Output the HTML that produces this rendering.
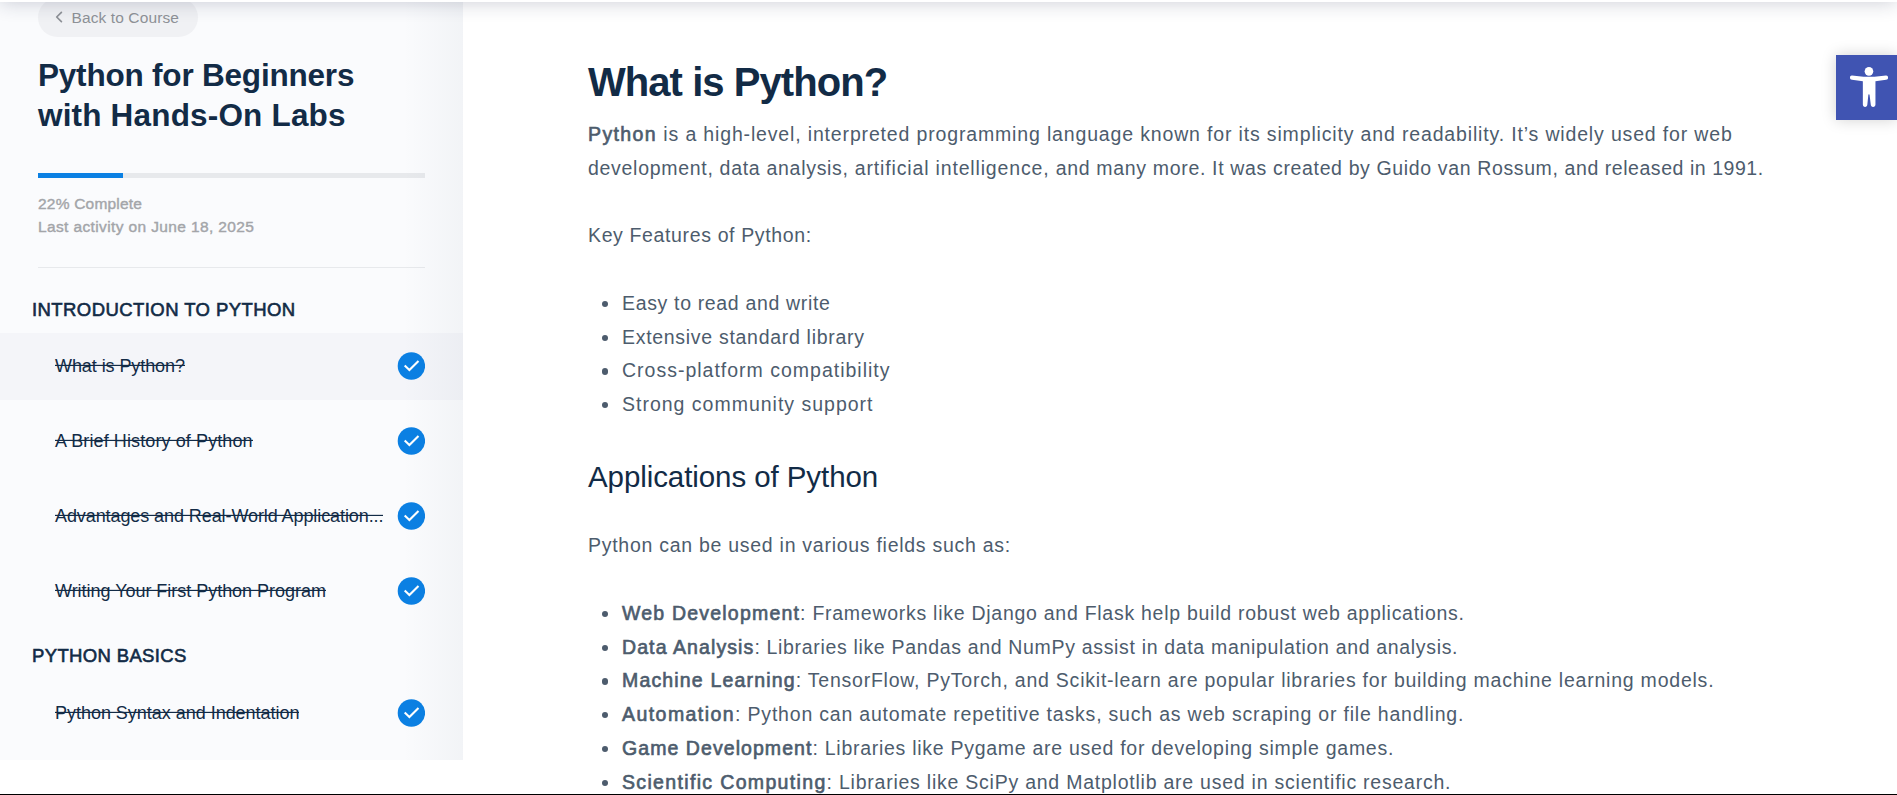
<!DOCTYPE html>
<html lang="en">
<head>
<meta charset="utf-8">
<title>What is Python? – Python for Beginners with Hands-On Labs</title>
<style>
*{box-sizing:border-box;margin:0;padding:0}
html,body{width:1897px;height:795px;overflow:hidden;background:#fff}
body{position:relative;font-family:"Liberation Sans",Arial,sans-serif;color:#4d5c6d;-webkit-font-smoothing:antialiased}
a{color:inherit;text-decoration:none}
ul{list-style:none}
.ln{white-space:nowrap;display:inline-block}

/* ---------- sidebar ---------- */
#side{position:absolute;left:0;top:0;width:463px;height:760px;background:#fafbfd;overflow:hidden}
#side:after{content:"";position:absolute;right:0;top:0;width:60px;height:100%;background:linear-gradient(to right,rgba(18,43,70,0),rgba(18,43,70,.037));pointer-events:none}
#back{position:absolute;left:38px;top:-2px;width:160px;height:39px;border-radius:20px;background:#f0f1f4;color:#8e9197;font-size:15.5px;line-height:39px}
#back svg{position:absolute;left:17px;top:13px}
#back .ln{position:absolute;left:33.5px;top:0}
#ctitle{position:absolute;left:38px;top:54.6px;font-weight:700;color:#122b46;font-size:31.5px;line-height:40px}
#ctitle .ln{display:block;width:max-content}
#pbar{position:absolute;left:38px;top:173px;width:387px;height:5px;background:#e7e9ec;border-radius:0}
#pbar i{display:block;width:85px;height:5px;background:#0b80e3}
#pstat{position:absolute;left:38px;top:192px;color:#a3a5a9;font-size:15.5px;line-height:23px;font-weight:400}
#pstat .ln{display:block;width:max-content;-webkit-text-stroke:.4px #a3a5a9}
#sdiv{position:absolute;left:38px;top:267px;width:387px;height:1px;background:#e7e9ec}
.sec{position:absolute;left:32px;color:#122b46;font-weight:400;-webkit-text-stroke:.6px #122b46;font-size:18.5px;line-height:24px;text-transform:none}
.row{position:absolute;left:0;width:463px;height:67px}
.row.cur{background:#f4f5f9}
.row .t{position:absolute;left:55px;top:21px;line-height:24px;font-size:18px;color:#122b46;text-decoration:none}
.row .t:after{content:"";position:absolute;left:0;right:0;top:11px;height:1px;background:#122b46;box-shadow:0 -.5px 0 rgba(18,43,70,.35)}
.row .c{position:absolute;left:397px;top:19px;width:28px;height:28px}

/* ---------- top shadow ---------- */
#topshadow{position:absolute;left:0;top:-60px;width:1897px;height:62px;background:#fff;box-shadow:0 0 20px rgba(28,38,70,.24);pointer-events:none}

/* ---------- main ---------- */
#main{position:absolute;left:588px;top:0;width:1250px}
#main h1{position:absolute;left:0;top:58px;font-size:40px;line-height:48px;font-weight:700;color:#122b46}
#main h2{position:absolute;left:0;top:456.6px;font-size:29.5px;line-height:40px;font-weight:400;color:#122b46}
.body{position:absolute;left:0;font-size:19.5px;line-height:33.75px;color:#4d5c6d}
.body b{font-weight:400;-webkit-text-stroke:.65px #4d5c6d}
.body .ln{display:block;width:max-content;height:33.75px}
ul.body li{position:relative;padding-left:34px;height:33.75px}
ul.body li:before{content:"";position:absolute;left:14px;top:13.9px;width:6.4px;height:6.4px;border-radius:50%;background:#4d5c6d}

/* ---------- accessibility button ---------- */
#a11y{position:absolute;left:1836px;top:55px;width:61px;height:65px;background:#4054b2;box-shadow:0 0 14px rgba(0,0,0,.18)}
#a11y svg{position:absolute;left:0;top:0}
#bline{position:absolute;left:0;top:794px;width:1897px;height:1px;background:#000}
</style>
</head>
<body>

<div id="side">
  <a id="back"><svg width="8" height="12" viewBox="0 0 8 12"><path d="M6.4 1.300L1.700 6L6.400 10.700" fill="none" stroke="#8e9197" stroke-width="1.7" stroke-linecap="round" stroke-linejoin="round"/></svg><span class="ln" id="back_t" style="letter-spacing:0.109px">Back to Course</span></a>
  <h2 id="ctitle"><span class="ln" id="ct1" style="letter-spacing:-0.204px">Python for Beginners</span><span class="ln" id="ct2" style="letter-spacing:0.177px">with Hands-On Labs</span></h2>
  <div id="pbar"><i></i></div>
  <div id="pstat"><span class="ln" id="ps1" style="letter-spacing:0.211px">22% Complete</span><span class="ln" id="ps2" style="letter-spacing:0.374px">Last activity on June 18, 2025</span></div>
  <div id="sdiv"></div>

  <div class="sec" style="top:298px"><span class="ln" id="sec1" style="letter-spacing:0.426px">INTRODUCTION TO PYTHON</span></div>
  <div class="row cur" style="top:333px"><span class="t ln" id="l1" style="letter-spacing:-0.077px">What is Python?</span><svg class="c" viewBox="0 0 28 28"><circle cx="14.4" cy="14" r="13.7" fill="#0b80e3"/><path d="M7.700 13.600L12.400 18L21.500 9" fill="none" stroke="#fff" stroke-width="2.1" stroke-linecap="butt" stroke-linejoin="miter"/></svg></div>
  <div class="row" style="top:408px"><span class="t ln" id="l2" style="letter-spacing:0.104px">A Brief History of Python</span><svg class="c" viewBox="0 0 28 28"><circle cx="14.4" cy="14" r="13.7" fill="#0b80e3"/><path d="M7.700 13.600L12.400 18L21.500 9" fill="none" stroke="#fff" stroke-width="2.1" stroke-linecap="butt" stroke-linejoin="miter"/></svg></div>
  <div class="row" style="top:483px"><span class="t ln" id="l3" style="letter-spacing:-0.087px">Advantages and Real-World Application...</span><svg class="c" viewBox="0 0 28 28"><circle cx="14.4" cy="14" r="13.7" fill="#0b80e3"/><path d="M7.700 13.600L12.400 18L21.500 9" fill="none" stroke="#fff" stroke-width="2.1" stroke-linecap="butt" stroke-linejoin="miter"/></svg></div>
  <div class="row" style="top:558px"><span class="t ln" id="l4" style="letter-spacing:-0.027px">Writing Your First Python Program</span><svg class="c" viewBox="0 0 28 28"><circle cx="14.4" cy="14" r="13.7" fill="#0b80e3"/><path d="M7.700 13.600L12.400 18L21.500 9" fill="none" stroke="#fff" stroke-width="2.1" stroke-linecap="butt" stroke-linejoin="miter"/></svg></div>
  <div class="sec" style="top:643.5px"><span class="ln" id="sec2" style="letter-spacing:0.354px">PYTHON BASICS</span></div>
  <div class="row" style="top:680px"><span class="t ln" id="l5" style="letter-spacing:-0.024px">Python Syntax and Indentation</span><svg class="c" viewBox="0 0 28 28"><circle cx="14.4" cy="14" r="13.7" fill="#0b80e3"/><path d="M7.700 13.600L12.400 18L21.500 9" fill="none" stroke="#fff" stroke-width="2.1" stroke-linecap="butt" stroke-linejoin="miter"/></svg></div>
</div>

<div id="main">
  <h1><span class="ln" id="h1" style="letter-spacing:-0.942px">What is Python?</span></h1>
  <p class="body" style="top:118.15px"><span class="ln"><b id="p1b" style="letter-spacing:1.397px">Python</b><span id="p1a" style="letter-spacing:0.843px"> is a high-level, interpreted programming language known for its simplicity and readability. It’s widely used for web</span></span><span class="ln"><span id="p1c1" style="letter-spacing:0.702px">development, data analysis, </span><span id="p1c2" style="letter-spacing:0.839px">artificial intelligence, </span><span id="p1c3" style="letter-spacing:0.669px">and many more. It was </span><span id="p1c4" style="letter-spacing:0.633px">created by Guido van Rossum, </span><span id="p1c5" style="letter-spacing:0.549px">and released in 1991.</span></span></p>
  <p class="body" style="top:219.4px"><span class="ln" id="p2" style="letter-spacing:0.635px">Key Features of Python:</span></p>
  <ul class="body" style="top:286.9px">
    <li><span class="ln" id="u1a" style="letter-spacing:0.658px">Easy to read and write</span></li>
    <li><span class="ln" id="u1b" style="letter-spacing:0.702px">Extensive standard library</span></li>
    <li><span class="ln" id="u1c" style="letter-spacing:0.998px">Cross-platform compatibility</span></li>
    <li><span class="ln" id="u1d" style="letter-spacing:0.995px">Strong community support</span></li>
  </ul>
  <h2><span class="ln" id="h2" style="letter-spacing:-0.082px">Applications of Python</span></h2>
  <p class="body" style="top:529.15px"><span class="ln" id="p3" style="letter-spacing:0.726px">Python can be used in various fields such as:</span></p>
  <ul class="body" style="top:596.95px">
    <li><span class="ln"><b id="u2ab" style="letter-spacing:1.203px">Web Development</b><span id="u2a" style="letter-spacing:0.73px">: Frameworks like Django and Flask help build robust web applications.</span></span></li>
    <li><span class="ln"><b id="u2bb" style="letter-spacing:1.096px">Data Analysis</b><span id="u2b" style="letter-spacing:0.669px">: Libraries like Pandas and NumPy assist in data manipulation and analysis.</span></span></li>
    <li><span class="ln"><b id="u2cb" style="letter-spacing:1.167px">Machine Learning</b><span id="u2c" style="letter-spacing:0.776px">: TensorFlow, PyTorch, and Scikit-learn are popular libraries for building machine learning models.</span></span></li>
    <li><span class="ln"><b id="u2db" style="letter-spacing:1.444px">Automation</b><span id="u2d" style="letter-spacing:0.801px">: Python can automate repetitive tasks, such as web scraping or file handling.</span></span></li>
    <li><span class="ln"><b id="u2eb" style="letter-spacing:1.067px">Game Development</b><span id="u2e" style="letter-spacing:0.72px">: Libraries like Pygame are used for developing simple games.</span></span></li>
    <li><span class="ln"><b id="u2fb" style="letter-spacing:1.343px">Scientific Computing</b><span id="u2f" style="letter-spacing:0.764px">: Libraries like SciPy and Matplotlib are used in scientific research.</span></span></li>
  </ul>
</div>

<div id="topshadow"></div>

<div id="a11y" title="Accessibility Tools"><svg width="61" height="65" viewBox="0 0 61 65"><g fill="#fff"><circle cx="32.95" cy="16.35" r="4.3"/><path d="M16 20.6C14.700 20.500 14 21.500 14 22.650C14 23.800 14.700 24.600 16 24.750L26.850 26.300L26.850 49.500C26.850 51 27.750 51.900 29.100 51.900C30.400 51.900 31.200 51 31.350 49.600L32.350 39.800C32.450 39.100 33.450 39.100 33.550 39.800L34.750 49.600C34.900 51 35.700 51.900 37.100 51.900C38.500 51.900 39.450 51 39.450 49.500L39.450 26.300L50.100 24.750C51.400 24.600 52.050 23.800 52.050 22.650C52.050 21.500 51.350 20.500 50 20.600L38.500 21.800L27.500 21.800Z"/></g></svg></div>
<div id="bline"></div>
</body>
</html>
